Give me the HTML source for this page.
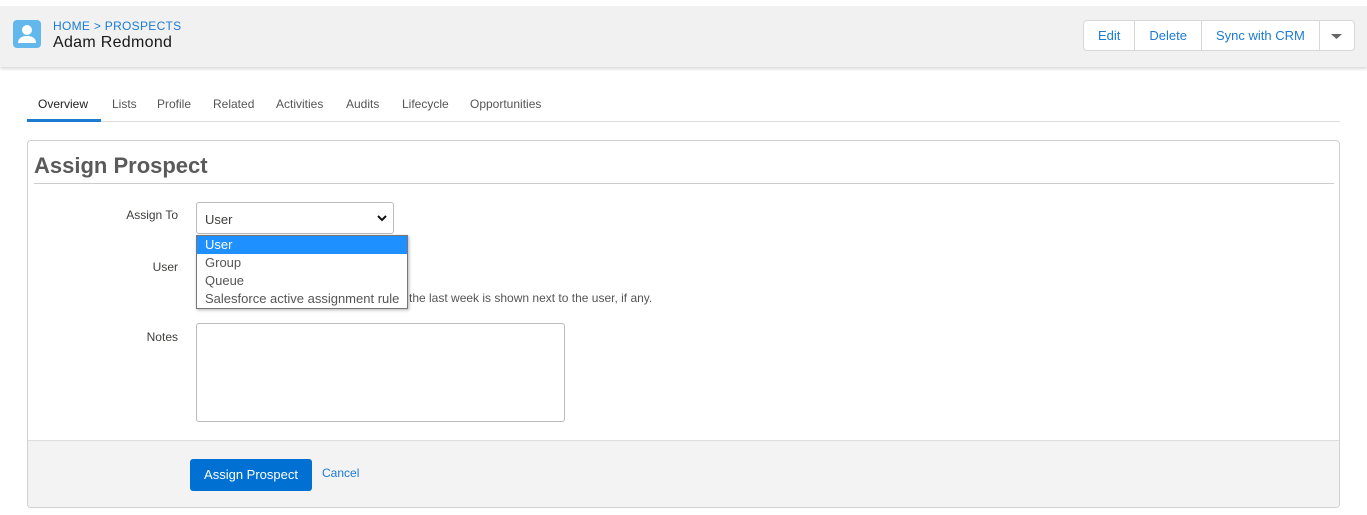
<!DOCTYPE html>
<html><head><style>
*{box-sizing:border-box;margin:0;padding:0}
body{width:1367px;height:515px;background:#fff;font-family:"Liberation Sans",sans-serif;position:relative;overflow:hidden;color:#3e3e3c}
.hdr{position:absolute;left:0;top:6px;width:1367px;height:61px;background:#f1f1f1;box-shadow:0 2px 3px rgba(0,0,0,.15)}
.av{position:absolute;left:13px;top:14px;width:28px;height:28px;border-radius:4px;background:#62b7ed}
.bc{position:absolute;left:53px;top:13px;font-size:12px;color:#1b7ad2;letter-spacing:.3px}
.nm{position:absolute;left:53px;top:28px;font-size:16px;color:#181818;letter-spacing:.3px}
.btns{position:absolute;left:1083px;top:14px;height:31px;display:flex;border:1px solid #d8d8d8;border-radius:4px;background:#fff}
.btns div{padding:0 14px;font-size:13px;color:#1b7ad2;line-height:29px;border-right:1px solid #d8d8d8}
.btns div:last-child{border-right:none;width:34px;padding:0}
.tabs{position:absolute;left:27px;top:97px;width:1313px;height:25px;border-bottom:1px solid #ddd;font-size:12px;color:#555}
.tabs span{position:absolute;top:0}
.card{position:absolute;left:27px;top:140px;width:1313px;height:368px;border:1px solid #d0d0d0;border-radius:4px;overflow:hidden}
.card h1{position:absolute;left:6px;top:12px;font-size:22px;color:#5a5a5a;font-weight:bold}
.hr{position:absolute;left:6px;top:42px;width:1300px;height:1px;background:#ccc}
.lbl{position:absolute;font-size:12px;color:#3e3e3c;text-align:right;width:150px;left:0}
.sel{position:absolute;left:168px;top:61px;width:198px;height:32px;border:1px solid #bbb;border-radius:3px;font-size:13px;padding:9px 8px}
.dd{position:absolute;left:168px;top:94px;width:212px;height:74px;border:1px solid #777;background:#fff;font-size:13px;box-shadow:1px 1px 3px rgba(0,0,0,.3)}
.dd div{height:18px;line-height:18px;padding-left:8px;color:#555;white-space:nowrap}
.ta{position:absolute;left:168px;top:182px;width:369px;height:99px;border:1px solid #bbb;border-radius:3px}
.ft{position:absolute;left:0;top:299px;width:1313px;height:69px;background:#f3f3f3;border-top:1px solid #ddd}
.ab{position:absolute;left:162px;top:18px;width:122px;height:32px;background:#0070d2;border-radius:3px;color:#fff;font-size:13px;text-align:center;line-height:32px}
</style></head><body>
<div class="hdr">
<div class="av"><svg width="28" height="28"><circle cx="14" cy="10" r="5" fill="#fff"/><path d="M5 23c0-5 4-7 9-7s9 2 9 7z" fill="#fff"/></svg></div>
<div class="bc">HOME &gt; PROSPECTS</div>
<div class="nm">Adam Redmond</div>
<div class="btns"><div>Edit</div><div>Delete</div><div>Sync with CRM</div><div><svg width="34" height="29"><path d="M11 13h11l-5.5 5z" fill="#666"/></svg></div></div>
</div>
<div class="tabs">
<span style="left:11px;color:#222">Overview</span><span style="left:85px">Lists</span><span style="left:130px">Profile</span><span style="left:186px">Related</span><span style="left:249px">Activities</span><span style="left:319px">Audits</span><span style="left:375px">Lifecycle</span><span style="left:443px">Opportunities</span>
<div style="position:absolute;left:0;top:22px;width:74px;height:3px;background:#1b7ad2"></div>
</div>
<div class="card">
<h1>Assign Prospect</h1><div class="hr"></div>
<div class="lbl" style="top:67px">Assign To</div>
<div class="sel">User<svg style="position:absolute;right:6px;top:12px" width="10" height="8"><path d="M1 1l4 4 4-4" stroke="#111" stroke-width="2" fill="none"/></svg></div>
<div class="lbl" style="top:119px">User</div>
<div style="position:absolute;left:381px;top:150px;font-size:12px;color:#555">the last week is shown next to the user, if any.</div>
<div class="lbl" style="top:189px">Notes</div>
<div class="ta"></div>
<div class="ft"><div class="ab">Assign Prospect</div><div style="position:absolute;left:294px;top:25px;font-size:12px;color:#1b7ad2">Cancel</div></div>
<div class="dd"><div style="background:#1e90ff;color:#fff">User</div><div>Group</div><div>Queue</div><div>Salesforce active assignment rule</div></div>
</div>
</body></html>
